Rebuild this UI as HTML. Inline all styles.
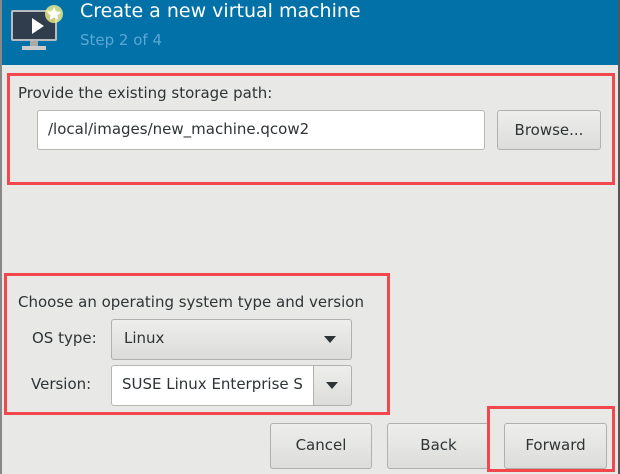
<!DOCTYPE html>
<html><head><style>
body{margin:0;width:620px;height:474px;background:#e8e8e7;position:relative;overflow:hidden;font-family:"DejaVu Sans","Liberation Sans",sans-serif;font-size:15px;color:#2e3436}
.a{position:absolute}
.hdr{left:0;top:0;width:618px;height:65px;background:#0271a8}
.red{border:3px solid #f2474c;box-sizing:border-box}
.btn{background:linear-gradient(#eeeeec,#dcdcda);border:1px solid #b0b0ae;border-radius:3px;box-sizing:border-box;text-align:center}
.ent{background:#fff;border:1px solid #b6b6b3;border-radius:3px;box-sizing:border-box}
</style></head><body>
<div class="a hdr"></div>
<div class="a" style="left:618px;top:0;width:2px;height:474px;background:#555"></div>
<div class="a" style="left:0;top:0;width:2px;height:474px;background:#888"></div>
<svg class="a" style="left:8px;top:2px" width="60" height="50">
<rect x="3" y="8" width="46" height="31" rx="2" fill="#b8bcbf"/>
<rect x="5" y="10" width="42" height="27" fill="#2f3d4c"/>
<polygon points="24,16 24,32 36,24" fill="#fff"/>
<rect x="22" y="39" width="8" height="5" fill="#aaa"/>
<rect x="14" y="44" width="24" height="4" fill="#ccc"/>
<circle cx="46" cy="12" r="9" fill="#f5f08a" opacity=".8"/>
<polygon points="46,5 48,9.5 53,10 49.5,13.5 50.5,18 46,15.5 41.5,18 42.5,13.5 39,10 44,9.5" fill="#fff"/>
</svg>
<div class="a" style="left:80px;top:0;font-size:19px;color:#fff">Create a new virtual machine</div>
<div class="a" style="left:80px;top:31px;font-size:15px;color:#5aa6d6">Step 2 of 4</div>
<div class="a red" style="left:7px;top:73px;width:608px;height:112px"></div>
<div class="a" style="left:18px;top:84px">Provide the existing storage path:</div>
<div class="a ent" style="left:37px;top:110px;width:448px;height:40px;padding:9px 0 0 10px">/local/images/new_machine.qcow2</div>
<div class="a btn" style="left:497px;top:110px;width:104px;height:40px;line-height:38px">Browse...</div>
<div class="a red" style="left:4px;top:273px;width:386px;height:142px"></div>
<div class="a" style="left:18px;top:293px">Choose an operating system type and version</div>
<div class="a" style="left:32px;top:329px">OS type:</div>
<div class="a btn" style="left:111px;top:319px;width:241px;height:41px;text-align:left;padding:9px 0 0 12px">Linux</div>
<svg class="a" style="left:324px;top:336px" width="12" height="8"><polygon points="0,0 12,0 6,7" fill="#2e3436"/></svg>
<div class="a" style="left:31px;top:375px">Version:</div>
<div class="a ent" style="left:111px;top:365px;width:241px;height:41px;padding:9px 0 0 10px;white-space:nowrap;overflow:hidden">SUSE Linux Enterprise S</div>
<div class="a btn" style="left:313px;top:365px;width:39px;height:41px;border-radius:0 3px 3px 0"></div>
<svg class="a" style="left:326px;top:382px" width="12" height="8"><polygon points="0,0 12,0 6,7" fill="#2e3436"/></svg>
<div class="a btn" style="left:270px;top:423px;width:102px;height:46px;line-height:42px">Cancel</div>
<div class="a btn" style="left:387px;top:423px;width:103px;height:46px;line-height:42px">Back</div>
<div class="a btn" style="left:504px;top:423px;width:103px;height:46px;line-height:42px">Forward</div>
<div class="a red" style="left:487px;top:406px;width:128px;height:66px"></div>
</body></html>
